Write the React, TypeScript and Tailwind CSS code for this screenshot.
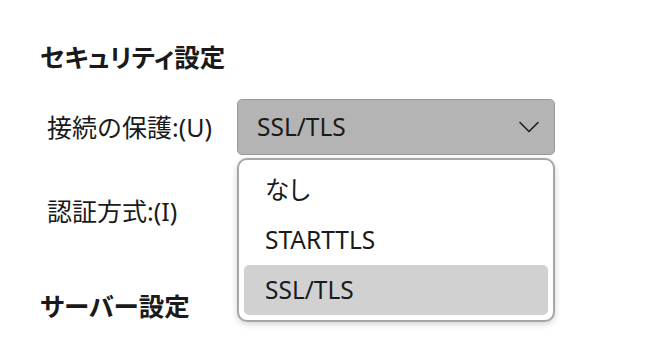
import React from "react";

const options = ["なし", "STARTTLS", "SSL/TLS"];

const Chevron: React.FC = () => (
  <svg width="20" height="12" viewBox="0 0 20 12" fill="none">
    <polyline
      points="1,1.5 10,10.5 19,1.5"
      stroke="#1f1f1f"
      strokeWidth="1.6"
      strokeLinecap="round"
      strokeLinejoin="round"
    />
  </svg>
);

const App: React.FC = () => {
  const selected = "SSL/TLS";

  return (
    <div
      className="w-[649px] h-[338px] overflow-hidden bg-white text-[#1a1a1a] pl-[40px] pt-[40px]"
      style={{ fontFamily: '"Noto Sans", "Noto Sans CJK JP", sans-serif' }}
    >
      <h2 className="text-[25.5px] leading-[34px] font-bold [font-feature-settings:'palt']">
        セキュリティ設定
      </h2>

      {/* 接続の保護 */}
      <div className="mt-[25px] flex items-center">
        <label className="w-[197px] pl-[7px] text-[25px] leading-[30px]">
          接続の保護:(U)
        </label>
        <div className="relative">
          <div className="w-[318px] h-[56px] flex items-center justify-between pl-[19px] pr-[15px] bg-[#b4b4b4] border border-[#999999] rounded-[5px]">
            <span className="text-[24.5px]">{selected}</span>
            <Chevron />
          </div>

          {/* open dropdown list */}
          <div className="absolute left-0 top-full mt-[3px] z-10 w-[318px] bg-white border-2 border-[#a6a6a6] rounded-[10px] shadow-[0_2px_6px_rgba(0,0,0,0.18)] p-[5px] [font-feature-settings:'palt']">
            {options.map((opt) => (
              <div
                key={opt}
                className={`h-[50px] flex items-center pl-[21px] rounded-[5px] text-[24.5px] ${
                  opt === selected ? "bg-[#d1d1d1]" : ""
                }`}
              >
                {opt}
              </div>
            ))}
          </div>
        </div>
      </div>

      {/* 認証方式 */}
      <div className="mt-[28px] flex items-center">
        <label className="w-[197px] pl-[7px] text-[25px] leading-[30px]">
          認証方式:(I)
        </label>
        <div className="w-[318px] h-[56px] bg-[#e5e5e5] border border-[#b0b0b0] rounded-[5px]" />
      </div>

      <h2 className="mt-[50px] text-[25.5px] leading-[34px] font-bold [font-feature-settings:'palt']">
        サーバー設定
      </h2>
    </div>
  );
};

export default App;
